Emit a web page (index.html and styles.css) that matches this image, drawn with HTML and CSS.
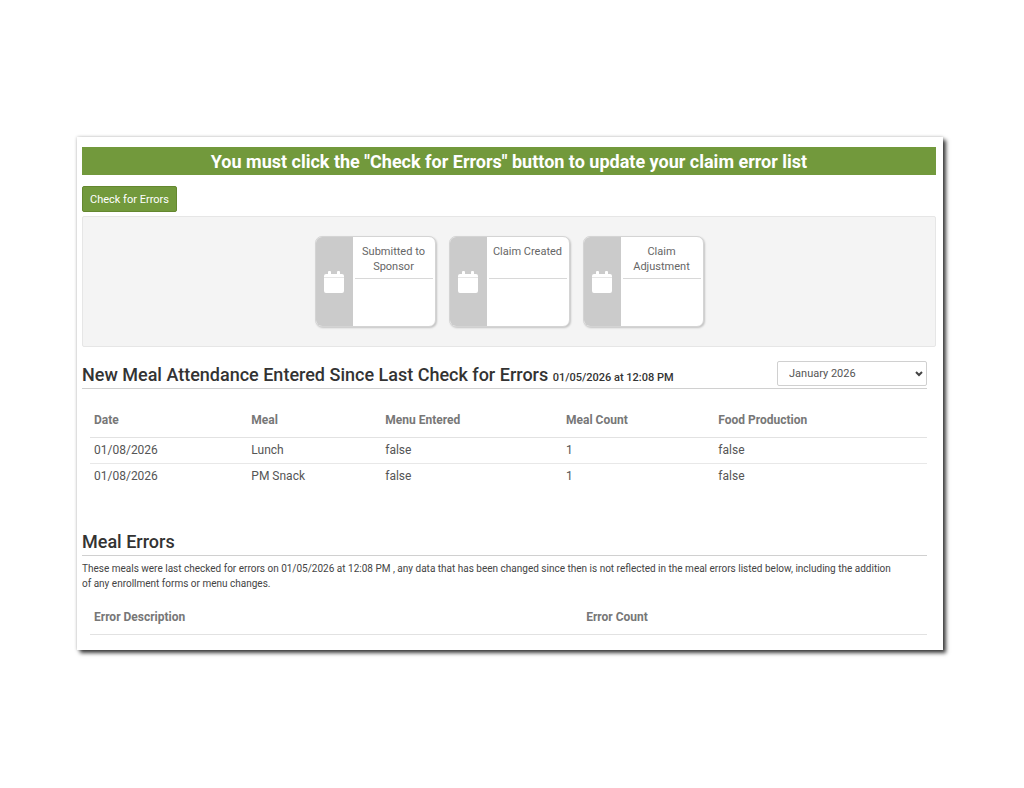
FILE: index.html
```
<!DOCTYPE html>
<html lang="en">
<head>
	<meta charset="UTF-8">
	<title>Claim Errors</title>
	<link rel="stylesheet" href="styles.css">
</head>
<body>
	<main class="panel">
		<div class="banner">You must click the "Check for Errors" button to update your claim error list</div>
		<button type="button" class="btnCheck">Check for Errors</button>

		<div class="steps">
			<div class="step">
				<div class="stepIcon">
					<svg viewBox="0 0 20 22" width="20" height="22"><path d="M4 3V1q0-1 1-1h1q1 0 1 1v2h6V1q0-1 1-1h1q1 0 1 1v2h2q2 0 2 2v1H0V5q0-2 2-2zM0 7h20v13q0 2-2 2H2q-2 0-2-2z"/><path class="seam" d="M0 6h20v1H0z"/></svg>
				</div>
				<div class="stepBody">
					<div class="stepTitle">Submitted to Sponsor</div>
				</div>
			</div>
			<div class="step">
				<div class="stepIcon">
					<svg viewBox="0 0 20 22" width="20" height="22"><path d="M4 3V1q0-1 1-1h1q1 0 1 1v2h6V1q0-1 1-1h1q1 0 1 1v2h2q2 0 2 2v1H0V5q0-2 2-2zM0 7h20v13q0 2-2 2H2q-2 0-2-2z"/><path class="seam" d="M0 6h20v1H0z"/></svg>
				</div>
				<div class="stepBody">
					<div class="stepTitle">Claim Created</div>
				</div>
			</div>
			<div class="step">
				<div class="stepIcon">
					<svg viewBox="0 0 20 22" width="20" height="22"><path d="M4 3V1q0-1 1-1h1q1 0 1 1v2h6V1q0-1 1-1h1q1 0 1 1v2h2q2 0 2 2v1H0V5q0-2 2-2zM0 7h20v13q0 2-2 2H2q-2 0-2-2z"/><path class="seam" d="M0 6h20v1H0z"/></svg>
				</div>
				<div class="stepBody">
					<div class="stepTitle">Claim Adjustment</div>
				</div>
			</div>
		</div>

		<section class="attendance">
			<div class="titleBar">
				<h2>New Meal Attendance Entered Since Last Check for Errors <small>01/05/2026 at 12:08 PM</small></h2>
				<div class="monthBox">
					<select class="month" aria-label="Claim month">
						<option>January 2026</option>
					</select>
					<svg class="arrow" viewBox="0 0 8 6" width="8" height="6"><path d="M1 1l3 3 3-3"/></svg>
				</div>
			</div>
			<table class="dataTab mealTab">
				<thead>
					<tr>
						<th class="colDate">Date</th>
						<th class="colMeal">Meal</th>
						<th class="colMenu">Menu Entered</th>
						<th class="colCount">Meal Count</th>
						<th>Food Production</th>
					</tr>
				</thead>
				<tbody>
					<tr>
						<td>01/08/2026</td>
						<td>Lunch</td>
						<td>false</td>
						<td>1</td>
						<td>false</td>
					</tr>
					<tr>
						<td>01/08/2026</td>
						<td>PM Snack</td>
						<td>false</td>
						<td>1</td>
						<td>false</td>
					</tr>
				</tbody>
			</table>
		</section>

		<section class="errors">
			<div class="titleBar">
				<h2>Meal Errors</h2>
			</div>
			<p class="note">These meals were last checked for errors on 01/05/2026 at 12:08 PM , any data that has been changed since then is not reflected in the meal errors listed below, including the addition<br> of any enrollment forms or menu changes.</p>
			<table class="dataTab errorTab">
				<thead>
					<tr>
						<th class="colDesc">Error Description</th>
						<th>Error Count</th>
					</tr>
				</thead>
			</table>
		</section>
	</main>
</body>
</html>
```
FILE: styles.css
```
* {
  box-sizing: border-box;
}
body {
  min-height: 100vh;
  margin: 0;
  padding: 137px 81px 0 77px;
  background: #fff;
  color: #444;
  font-family: Roboto, "Liberation Sans", sans-serif;
  font-size: 11px;
  line-height: 15px;
}
.panel {
  padding: 10px 7px 15px 5px;
  background: #fff;
  box-shadow: 3px 3px 4px rgba(0, 0, 0, 0.75), 0 0 3px rgba(0, 0, 0, 0.25);
}
.banner {
  padding-top: 1px;
  background: #72993c;
  color: #fff;
  font-size: 18px;
  font-weight: 700;
  line-height: 27px;
  text-align: center;
}
.btnCheck {
  display: block;
  height: 26px;
  margin: 11px 0 4px;
  padding: 0 7px;
  border: 1px solid #64872f;
  border-radius: 2px;
  background: #72993c;
  color: #fff;
  font-family: inherit;
  font-size: 11px;
}
.steps {
  display: flex;
  justify-content: center;
  gap: 13px;
  padding: 19px 0;
  border: 1px solid #e6e6e6;
  border-radius: 2px;
  background: #f4f4f4;
}
.step {
  display: flex;
  width: 121px;
  height: 91px;
  overflow: hidden;
  border: 1px solid #d4d4d4;
  border-radius: 7px;
  background: #fff;
  box-shadow: 1px 1px 2px rgba(0, 0, 0, 0.2);
}
.stepIcon {
  display: flex;
  align-items: center;
  justify-content: center;
  width: 37px;
  background: #cbcbcb;
}
.stepIcon svg {
  fill: #fff;
}
.stepIcon .seam {
  fill: #e6e6e6;
}
.stepBody {
  flex: 1;
  padding: 0 2px;
}
.stepTitle {
  height: 42px;
  padding: 7px 4px 0;
  border-bottom: 1px solid #d8d8d8;
  color: #666;
  text-align: center;
}
.titleBar {
  display: flex;
  justify-content: space-between;
  align-items: flex-start;
  margin-right: 9px;
  border-bottom: 1px solid #d0d0d0;
}
.titleBar h2 {
  margin: 0;
  color: #333;
  font-size: 18px;
  font-weight: 500;
  line-height: 27px;
}
.titleBar small {
  font-size: 11px;
  line-height: 1;
}
.attendance {
  padding-top: 14px;
}
.monthBox {
  position: relative;
}
.month {
  display: block;
  width: 150px;
  height: 25px;
  padding: 0 11px;
  appearance: none;
  border: 1px solid #d0d0d0;
  border-radius: 2px;
  background: #fff;
  color: #555;
  font-family: inherit;
  font-size: 11px;
}
.arrow {
  position: absolute;
  top: 10px;
  right: 4px;
  fill: none;
  stroke: #444;
  stroke-width: 2;
  pointer-events: none;
}
.dataTab {
  width: calc(100% - 17px);
  margin-left: 8px;
  border-collapse: collapse;
  table-layout: fixed;
  font-size: 12px;
  text-align: left;
}
.dataTab th {
  height: 34px;
  padding: 1px 4px 0;
  border-bottom: 1px solid #e2e2e2;
  color: #777;
  font-weight: 700;
}
.dataTab td {
  height: 26px;
  padding: 0 4px;
  color: #555;
}
.dataTab tbody tr + tr td {
  border-top: 1px solid #e8e8e8;
}
.mealTab {
  margin-top: 14px;
}
.colDate {
  width: 18.8%;
}
.colMeal {
  width: 16%;
}
.colMenu {
  width: 21.6%;
}
.colCount {
  width: 18.2%;
}
.errors {
  padding-top: 39px;
}
.note {
  margin: 5px 0 9px;
  font-size: 10px;
}
.colDesc {
  width: 58.8%;
}
```
